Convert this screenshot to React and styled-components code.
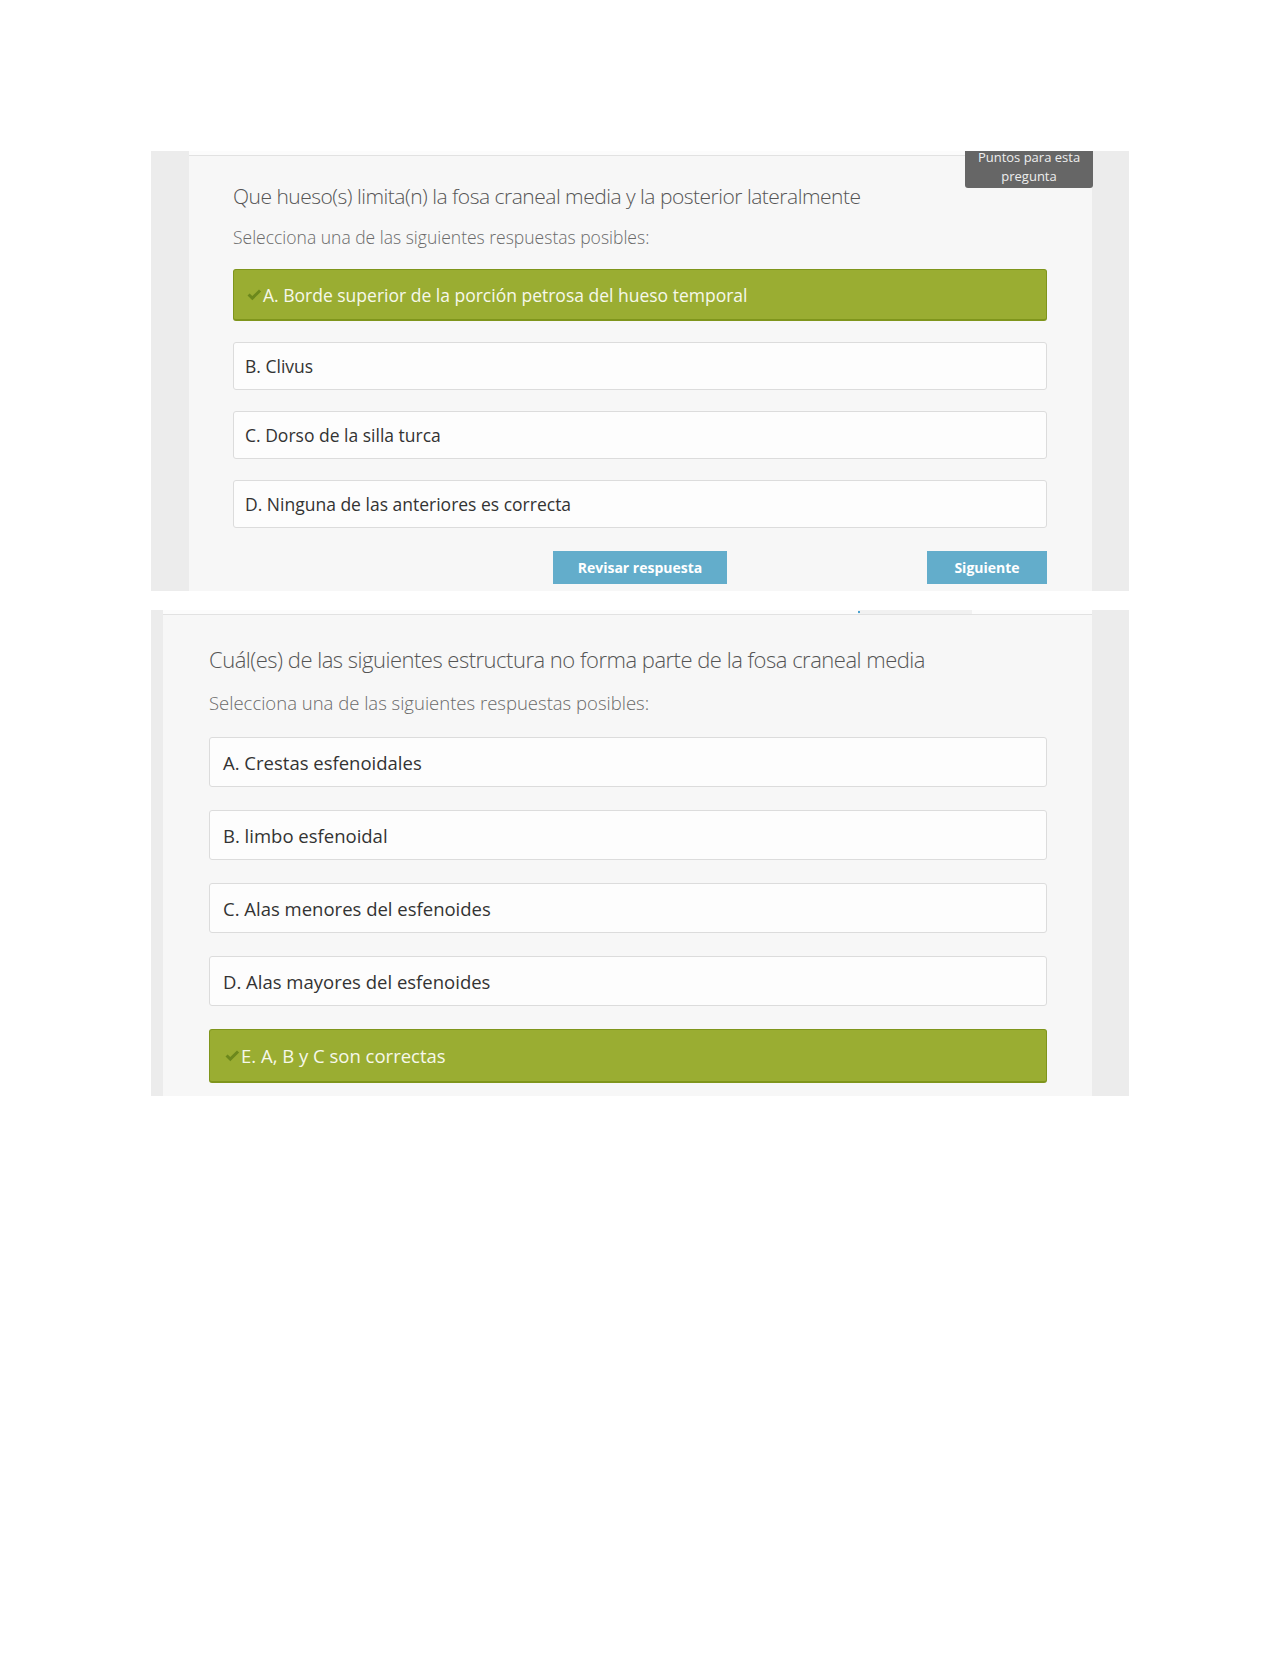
import styled, { createGlobalStyle } from "styled-components";

const GlobalStyle = createGlobalStyle`
    body {
        margin: 0;
        background: #ffffff;
        font-family: 'Open Sans', 'Noto Sans', sans-serif;
    }
`;

// two scales: the second screenshot is a bit bigger
const sizes = {
    small: {
        panelLeft: 38, padTop: 30, padLeft: 44, padBottom: 7,
        qFont: 21, qLine: 30, qSpacing: -0.5, subGap: 15, subFont: 17.5, subLine: 22,
        listGap: 21, optGap: 21, optHeight: 46, optFont: 17.5, optPad: 11,
    },
    large: {
        panelLeft: 12, padTop: 33, padLeft: 46, padBottom: 13,
        qFont: 22, qLine: 33, qSpacing: -0.5, subGap: 15, subFont: 18.5, subLine: 24.5,
        listGap: 21.5, optGap: 23, optHeight: 48, optFont: 18.5, optPad: 13,
    },
};

const questions = [
    {
        size: "small",
        points: true,
        buttons: true,
        title: "Que hueso(s) limita(n) la fosa craneal media y la posterior lateralmente",
        options: [
            { text: "A. Borde superior de la porción petrosa del hueso temporal", correct: true },
            { text: "B. Clivus" },
            { text: "C. Dorso de la silla turca" },
            { text: "D. Ninguna de las anteriores es correcta" },
        ],
    },
    {
        size: "large",
        progress: true,
        title: "Cuál(es) de las siguientes estructura no forma parte de la fosa craneal media",
        options: [
            { text: "A. Crestas esfenoidales" },
            { text: "B. limbo esfenoidal" },
            { text: "C. Alas menores del esfenoides" },
            { text: "D. Alas mayores del esfenoides" },
            { text: "E. A, B y C son correctas", correct: true },
        ],
    },
];

const Check = () => (
    <svg width="15" height="12" viewBox="0 0 15 12">
        <path d="M0.5 6.5 L2.6 4.4 L5.3 7.1 L12 0.5 L14.1 2.6 L5.3 11.3 Z" fill="#6c881c" />
    </svg>
);

const Question = ({ q }) => {
    const s = sizes[q.size];
    return (
        <Panel $s={s}>
            <Card $s={s}>
                {q.points && (
                    <PointsTag>
                        <span>Puntos para esta</span>
                        <span>pregunta</span>
                    </PointsTag>
                )}
                {q.progress && <Progress />}
                <Title $s={s}>{q.title}</Title>
                <Subtitle $s={s}>Selecciona una de las siguientes respuestas posibles:</Subtitle>
                <Options $s={s}>
                    {q.options.map((o) => (
                        <Option key={o.text} $s={s} $correct={o.correct}>
                            {o.correct && <Check />}
                            {o.text}
                        </Option>
                    ))}
                </Options>
                {q.buttons && (
                    <Actions>
                        <Button $center>Revisar respuesta</Button>
                        <Button>Siguiente</Button>
                    </Actions>
                )}
            </Card>
        </Panel>
    );
};

const App = () => {
    return (
        <Page>
            <GlobalStyle />
            {questions.map((q) => (
                <Question key={q.title} q={q} />
            ))}
        </Page>
    );
};

const Page = styled.div`
    padding: 151px 0 0 151px;
    width: 978px;
    display: flex;
    flex-direction: column;
    gap: 19px;
`;

const Panel = styled.section`
    background: #ececec;
    display: flex;
    padding: 0 37px 0 ${(p) => p.$s.panelLeft}px;
`;

const Card = styled.div`
    flex: 1;
    position: relative;
    background: #f7f7f7;
    box-shadow: inset 0 4px 0 #fcfcfc, inset 0 5px 0 #e2e2e2;
    padding: ${(p) => p.$s.padTop}px 45px ${(p) => p.$s.padBottom}px ${(p) => p.$s.padLeft}px;
    display: flex;
    flex-direction: column;
`;

const PointsTag = styled.div`
    position: absolute;
    top: 0;
    right: -1px;
    width: 128px;
    height: 37px;
    overflow: hidden;
    background: #666666;
    border-radius: 0 0 3px 3px;
    color: #eeeeee;
    font-size: 13px;
    line-height: 19px;
    text-align: center;
    display: flex;
    flex-direction: column;

    span:first-child {
        margin-top: -3px;
    }
`;

const Progress = styled.div`
    position: absolute;
    top: 0;
    left: 695px;
    width: 114px;
    height: 4px;
    background: #f1f1f1;

    &::before {
        content: '';
        position: absolute;
        left: 0;
        top: 1px;
        width: 2px;
        height: 2px;
        background: #4aa3d1;
    }
`;

const Title = styled.h2`
    margin: 0;
    font-weight: 300;
    color: #555555;
    font-size: ${(p) => p.$s.qFont}px;
    line-height: ${(p) => p.$s.qLine}px;
    letter-spacing: ${(p) => p.$s.qSpacing}px;
`;

const Subtitle = styled.p`
    margin: ${(p) => p.$s.subGap}px 0 0 0;
    font-weight: 300;
    color: #6a6a6a;
    font-size: ${(p) => p.$s.subFont}px;
    line-height: ${(p) => p.$s.subLine}px;
`;

const Options = styled.div`
    margin-top: ${(p) => p.$s.listGap}px;
    display: flex;
    flex-direction: column;
    gap: ${(p) => p.$s.optGap}px;
`;

const Option = styled.div`
    display: flex;
    align-items: center;
    height: ${(p) => p.$s.optHeight + (p.$correct ? 3 : 0)}px;
    box-sizing: content-box;
    padding-left: ${(p) => p.$s.optPad}px;
    border-radius: 3px;
    font-size: ${(p) => p.$s.optFont}px;
    background: ${(p) => (p.$correct ? "#9aad32" : "#fdfdfd")};
    border: 1px solid ${(p) => (p.$correct ? "#7f951c" : "#dcdcdc")};
    border-bottom-width: ${(p) => (p.$correct ? 2 : 1)}px;
    color: ${(p) => (p.$correct ? "#f6f8ea" : "#333333")};

    svg {
        margin: 0 1px 0 2px;
        flex-shrink: 0;
    }
`;

const Actions = styled.div`
    margin-top: 23px;
    display: grid;
    grid-template-columns: 1fr auto 1fr;
`;

const Button = styled.button`
    grid-column: ${(p) => (p.$center ? "2" : "3")};
    justify-self: ${(p) => (p.$center ? "center" : "end")};
    width: ${(p) => (p.$center ? 174 : 120)}px;
    height: 33px;
    border: none;
    background: #63adcb;
    color: #ffffff;
    font-family: 'Open Sans', sans-serif;
    font-weight: 700;
    font-size: 14px;
    cursor: pointer;
`;

export default App;
